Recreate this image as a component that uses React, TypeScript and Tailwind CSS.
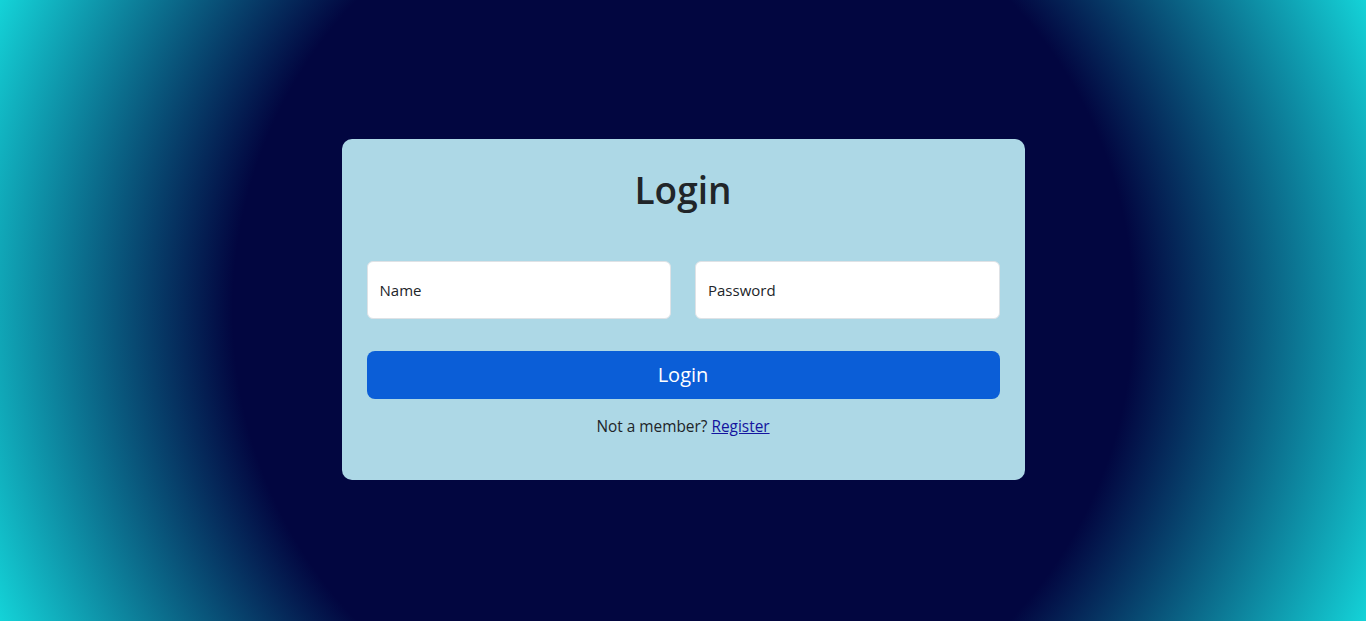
import React from "react";

export default function App() {
  return (
    <div
      className="min-h-screen flex items-center justify-center pb-0.5 bg-[radial-gradient(circle,#020640_60%,#14d3d8_100%)] text-[#212529]"
      style={{ fontFamily: '"Open Sans", "Noto Sans", sans-serif' }}
    >
      <div className="w-1/2 rounded-[10px] bg-[#add8e6] p-[25px]">
        <h1 className="text-center text-[37px] leading-[48px] font-semibold pt-[2px] -mb-[2px]">Login</h1>

        <form className="mt-[49px]" onSubmit={(e) => e.preventDefault()}>
          <div className="grid grid-cols-2 gap-6">
            <input
              type="text"
              placeholder="Name"
              className="h-[58px] rounded-md border border-[#dee2e6] bg-white px-3 text-[15px] outline-none placeholder:text-[#212529]"
            />
            <input
              type="password"
              placeholder="Password"
              className="h-[58px] rounded-md border border-[#dee2e6] bg-white px-3 text-[15px] outline-none placeholder:text-[#212529]"
            />
          </div>

          <button
            type="submit"
            className="mt-8 h-12 w-full rounded-lg bg-[#0b5ed7] text-[20px] text-white"
          >
            Login
          </button>
        </form>

        <p className="mt-4 mb-4 text-center text-[15.4px] leading-6">
          Not a member?{" "}
          <a href="#" className="text-[#14149e] underline">
            Register
          </a>
        </p>
      </div>
    </div>
  );
}
